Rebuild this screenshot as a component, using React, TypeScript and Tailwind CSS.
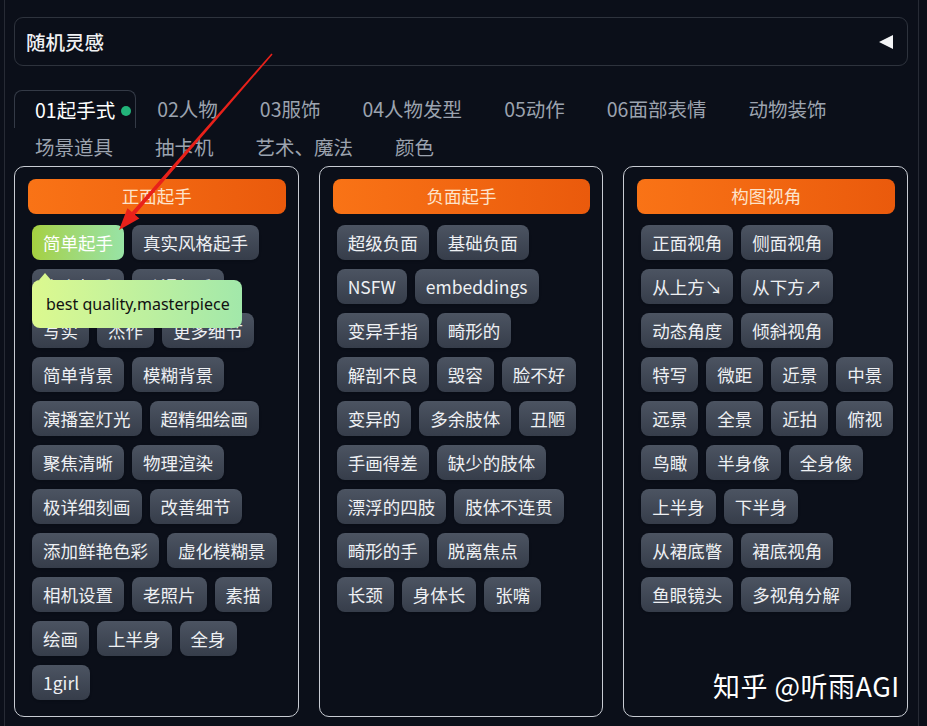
import React from 'react';

const tabs = ['01起手式', '02人物', '03服饰', '04人物发型', '05动作', '06面部表情', '动物装饰', '场景道具', '抽卡机', '艺术、魔法', '颜色'];

const panels = [
  {
    title: '正面起手',
    chips: [
      '简单起手', '真实风格起手', '中文起手', '动漫起手', '写实', '杰作', '更多细节',
      '简单背景', '模糊背景', '演播室灯光', '超精细绘画', '聚焦清晰', '物理渲染',
      '极详细刻画', '改善细节', '添加鲜艳色彩', '虚化模糊景', '相机设置', '老照片', '素描',
      '绘画', '上半身', '全身', '1girl',
    ],
  },
  {
    title: '负面起手',
    chips: [
      '超级负面', '基础负面', 'NSFW', 'embeddings', '变异手指', '畸形的', '解剖不良', '毁容', '脸不好',
      '变异的', '多余肢体', '丑陋', '手画得差', '缺少的肢体', '漂浮的四肢', '肢体不连贯',
      '畸形的手', '脱离焦点', '长颈', '身体长', '张嘴',
    ],
  },
  {
    title: '构图视角',
    chips: [
      '正面视角', '侧面视角', '从上方↘', '从下方↗', '动态角度', '倾斜视角',
      '特写', '微距', '近景', '中景', '远景', '全景', '近拍', '俯视',
      '鸟瞰', '半身像', '全身像', '上半身', '下半身', '从裙底瞥', '裙底视角', '鱼眼镜头', '多视角分解',
    ],
  },
];

const cjk = { fontFamily: '"Noto Sans CJK SC", "Noto Sans", sans-serif' };

function Chip({ label, active }: { label: string; active?: boolean }) {
  if (active) {
    return (
      <span className="relative flex h-[35px] items-center rounded-[8px] bg-linear-to-r from-[#a5d03f] to-[#98e3a5] px-[11px] text-[17.5px] leading-none text-white">
        {label}
        {/* hover tooltip */}
        <span className="absolute left-0 top-[48px] z-10 block">
          <span className="ml-[7px] block h-0 w-0 border-x-[6px] border-b-[7px] border-x-transparent border-b-[#d8f78d]" />
          <span
            className="flex h-[48px] w-[210px] items-center rounded-[8px] bg-linear-to-r from-[#dcf98f] to-[#a2e8aa] pl-[14px] text-[16px] text-[#111] whitespace-nowrap"
            style={{ fontFamily: '"Noto Sans", sans-serif' }}
          >
            best quality,masterpiece
          </span>
        </span>
      </span>
    );
  }
  return (
    <span className="flex h-[35px] items-center rounded-[8px] bg-linear-to-b from-[#4c5462] to-[#363d4a] px-[11px] text-[17.5px] leading-none text-[#eef0f3] shadow-sm">
      {label}
    </span>
  );
}

export default function App() {
  return (
    <div className="relative h-[726px] w-[927px] overflow-hidden bg-[#0b0f19]" style={cjk}>
      <div className="ml-[4px] h-full w-[915px] border-x border-[#272b35] pl-[9px] pr-[10px] pt-[17px]">
        {/* accordion header */}
        <div className="flex h-[49px] items-center justify-between rounded-[9px] border border-[#2e333d] pl-[11px] pr-[13px]">
          <span className="text-[19.5px] font-medium text-[#f0f1f3]">随机灵感</span>
          <svg width="16" height="16" viewBox="0 0 16 16">
            <path d="M1 8 L15 1 L15 15 Z" fill="#f3f4f6" />
          </svg>
        </div>

        {/* tabs */}
        <div className="mt-[24px] flex flex-wrap">
          {tabs.map((t, i) => (
            <div
              key={t}
              className={
                i === 0
                  ? 'relative flex h-[38px] items-center rounded-t-[8px] border border-b-0 border-[#343a46] px-[20px] text-[19.5px] text-white'
                  : 'flex h-[38px] items-center border border-transparent px-[20px] text-[19.5px] text-[#9ca3af]'
              }
            >
              {t}
              {i === 0 && <span className="absolute right-[4px] top-[15px] h-[10px] w-[10px] rounded-full bg-[#22b47a]" />}
            </div>
          ))}
        </div>

        {/* panels */}
        <div className="grid grid-cols-3 gap-[20px]">
          {panels.map((p) => (
            <div key={p.title} className="h-[551px] rounded-[10px] border border-[#c8ccd3] pb-[15px] pl-[13px] pr-[12px] pt-[12px]">
              <div className="flex h-[35px] items-center justify-center rounded-[8px] bg-linear-to-r from-[#f97316] to-[#ea5a0c] text-[17.5px] text-[#fde3cb]">
                {p.title}
              </div>
              <div className="mt-[11px] flex flex-wrap gap-x-[8px] gap-y-[9px] pl-[4px]">
                {p.chips.map((c, i) => (
                  <Chip key={c + i} label={c} active={p.title === '正面起手' && i === 0} />
                ))}
              </div>
            </div>
          ))}
        </div>
      </div>

      {/* red annotation arrow */}
      <svg className="pointer-events-none absolute left-0 top-0 z-20" width="927" height="726">
        <polygon
          points="272.6,54.5 134.9,214.7 139.4,218.6 119,230 127.4,208.2 131.9,212.1 271.4,53.5"
          fill="#e8211a"
        />
      </svg>

      {/* watermark */}
      <div className="pointer-events-none absolute left-[713px] top-[669px] z-20 text-[27px] leading-[34px] tracking-[0.5px] text-white">
        知乎 @听雨AGI
      </div>
    </div>
  );
}
